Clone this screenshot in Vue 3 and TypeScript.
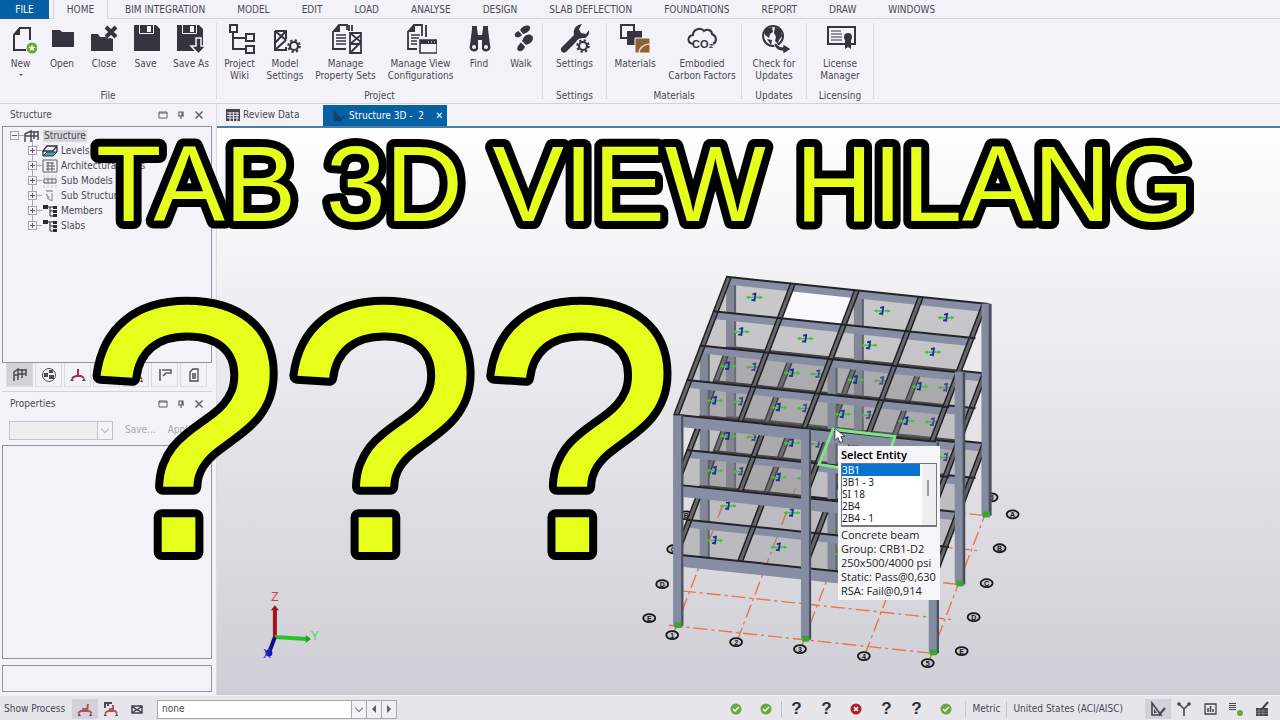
<script setup lang="ts">
import { ref } from 'vue'

interface RibbonItem { icon: string; lines: string[]; width: number; drop?: boolean }
interface RibbonGroup { title: string; items: RibbonItem[] }
interface Pt { x: number; y: number }

const tabs = ['BIM INTEGRATION', 'MODEL', 'EDIT', 'LOAD', 'ANALYSE', 'DESIGN', 'SLAB DEFLECTION', 'FOUNDATIONS', 'REPORT', 'DRAW', 'WINDOWS']

const groups: RibbonGroup[] = [
  { title: 'File', items: [
    { icon: 'new', lines: ['New'], width: 41, drop: true },
    { icon: 'open', lines: ['Open'], width: 42 },
    { icon: 'close', lines: ['Close'], width: 42 },
    { icon: 'save', lines: ['Save'], width: 41 },
    { icon: 'saveas', lines: ['Save As'], width: 50 },
  ] },
  { title: 'Project', items: [
    { icon: 'wiki', lines: ['Project', 'Wiki'], width: 45 },
    { icon: 'model', lines: ['Model', 'Settings'], width: 46 },
    { icon: 'props', lines: ['Manage', 'Property Sets'], width: 75 },
    { icon: 'views', lines: ['Manage View', 'Configurations'], width: 75 },
    { icon: 'find', lines: ['Find'], width: 42 },
    { icon: 'walk', lines: ['Walk'], width: 42 },
  ] },
  { title: 'Settings', items: [{ icon: 'wrench', lines: ['Settings'], width: 63 }] },
  { title: 'Materials', items: [
    { icon: 'materials', lines: ['Materials'], width: 56 },
    { icon: 'co2', lines: ['Embodied', 'Carbon Factors'], width: 78 },
  ] },
  { title: 'Updates', items: [{ icon: 'globe', lines: ['Check for', 'Updates'], width: 64 }] },
  { title: 'Licensing', items: [{ icon: 'license', lines: ['License', 'Manager'], width: 66 }] },
]

const tree = [
  { icon: 't-levels', label: 'Levels' },
  { icon: 't-grid', label: 'Architectural Grids' },
  { icon: 't-sub', label: 'Sub Models' },
  { icon: 't-str', label: 'Sub Structures' },
  { icon: 't-mem', label: 'Members' },
  { icon: 't-mem', label: 'Slabs' },
]
const paneTabs = ['s-frame', 's-globe', 's-support', 's-flag', 's-flag', 's-beam', 's-doc']
const checks = ['ok', 'ok', '|', 'q', 'q', 'err', 'q', 'q', 'ok']
const entities = ['3B1', '3B1 - 3', 'SI 18', '2B4', '2B4 - 1']
const selected = ref('3B1')

const STOREY = 70
const node = (i: number, j: number, level: number): Pt => ({
  x: 730 + 64 * i - 13.2 * j,
  y: 277 + 6.8 * i + 34.5 * j + STOREY * level,
})
const poly = (pts: Pt[]) => pts.map(p => `${p.x.toFixed(1)},${p.y.toFixed(1)}`).join(' ')
const idx = [0, 1, 2, 3, 4]
const opening = poly([node(1, 0, 0), node(2, 0, 0), node(2, 1, 0), node(1, 1, 0)])

const storeys = [2, 1, 0].map(level => {
  const columns = [0, 2, 4].flatMap(j => [0, 2, 4].map(i => {
    const p = node(i, j, level)
    return { x: p.x, y: p.y, h: level === 2 ? 72 : STOREY }
  }))
  const slabs: { pts: string; c: Pt }[] = []
  for (let j = 0; j < 4; j++) {
    for (let i = 0; i < 4; i++) {
      if (level === 0 && i === 1 && j === 0) continue
      if (level === 1 && i === 2 && j === 3) continue
      const q = [node(i, j, level), node(i + 1, j, level), node(i + 1, j + 1, level), node(i, j + 1, level)]
      slabs.push({ pts: poly(q), c: { x: (q[0].x + q[2].x) / 2, y: (q[0].y + q[2].y) / 2 } })
    }
  }
  const cross = idx.map(j => {
    const a = node(0, j, level), b = node(4, j, level)
    const d = j === 4 ? 12 : 8
    return { a, b, face: poly([a, b, { x: b.x, y: b.y + d }, { x: a.x, y: a.y + d }]) }
  })
  const along = idx.map(i => ({ a: node(i, 0, level), b: node(i, 4, level) }))
  return { level, columns, slabs, cross, along }
})

const ground = (i: number, j: number): Pt => {
  const p = node(i, j, 3)
  return { x: p.x, y: p.y + 2 }
}
const gridLines = [
  ...idx.map(i => [ground(i, -0.2), ground(i, 4.2)]),
  ...idx.map(j => [ground(-0.12, j), ground(4.12, j)]),
]
const bases = [0, 2, 4].flatMap(j => [0, 2, 4].map(i => ground(i, j)))
const marks = [
  { t: 'E', x: 650, y: 619 }, { t: 'D', x: 663, y: 585 }, { t: 'C', x: 674, y: 550 }, { t: 'B', x: 687, y: 516 },
  { t: '1', x: 673, y: 636 }, { t: '2', x: 737, y: 643 }, { t: '3', x: 801, y: 650 }, { t: '4', x: 865, y: 657 }, { t: '5', x: 929, y: 664 },
  { t: 'E', x: 963, y: 652 }, { t: 'D', x: 975, y: 618 }, { t: 'C', x: 988, y: 584 }, { t: 'B', x: 1001, y: 549 }, { t: 'A', x: 1014, y: 515 },
  { t: '5', x: 993, y: 498 },
]
</script>

<template>
  <div class="app">
    <svg class="defs" aria-hidden="true">
      <symbol id="new" viewBox="0 0 32 32">
        <path d="M14 5h11v12M9 12v15h12M9 12l6-7" fill="none" stroke="#36343f" stroke-width="2" />
        <path d="M8 12h7V4z" fill="#36343f" />
        <circle cx="27" cy="25" r="5.500" fill="#6aa43c" /><path d="M27 21.500l1 2.300 2.500.2-2 1.700.7 2.400-2.200-1.300-2.200 1.300.7-2.400-2-1.700 2.500-.2z" fill="#fff" />
      </symbol>
      <symbol id="open" viewBox="0 0 32 32"><path d="M6 7h8l2 2h12v15H6z" fill="#36343f" /></symbol>
      <symbol id="close" viewBox="0 0 32 32">
        <path d="M3 11h7l2 3h7l6 2v12H3z" fill="#36343f" /><path d="M18 4l10 10M28 4L18 14" stroke="#f3f2f8" stroke-width="6" /><path d="M18 4l10 10M28 4L18 14" stroke="#36343f" stroke-width="4" />
      </symbol>
      <symbol id="save" viewBox="0 0 32 32"><path d="M4 2h22l4 4v22H4z" fill="#36343f" /><path d="M17 3h4v6h-4z" fill="#f3f2f8" /><path d="M9.500 2v8.500h14V2" fill="none" stroke="#f3f2f8" /></symbol>
      <symbol id="saveas" viewBox="0 0 32 32"><path d="M2 2h22l4 4v22H2z" fill="#36343f" /><path d="M15 3h4v6h-4z" fill="#f3f2f8" /><path d="M7.500 2v8.500h14V2" fill="none" stroke="#f3f2f8" /><path d="M21 15h5v8h5l-7.500 8L16 23h5z" fill="#36343f" stroke="#f3f2f8" stroke-width="1.500" /></symbol>
      <symbol id="wiki" viewBox="0 0 32 32"><path d="M6 2h7v7H6zM22 11h8v7h-8zM22 23h8v7h-8zM9 9v17h13M9 15h13" fill="none" stroke="#36343f" stroke-width="2" /></symbol>
      <symbol id="gear" viewBox="0 0 14 14"><circle cx="7" cy="7" r="4" fill="none" stroke="#36343f" stroke-width="2.200" /><circle cx="7" cy="7" r="5.800" fill="none" stroke="#36343f" stroke-width="2" stroke-dasharray="2.300 2.250" /></symbol>
      <symbol id="model" viewBox="0 0 32 32"><path d="M6 8h11v8M6 8v19h11v-3M6 8l11 9M6 27l11-10M6 20l11-12" fill="none" stroke="#36343f" stroke-width="2" /><use href="#gear" x="18" y="16" width="14" height="14" /></symbol>
      <symbol id="props" viewBox="0 0 32 32"><path d="M16 26H3V9l6-7h8v5M22 2v6M19 2v6" fill="none" stroke="#36343f" stroke-width="1.800" /><path d="M2 9h8V1z" fill="#36343f" /><path d="M6 12h10M6 15h10M6 18h10M6 21h10" stroke="#36343f" stroke-width="1.500" /><path d="M20 10h11v20H20zM20 10l11 9M20 21l11-9M20 30l11-11M20 21h11" fill="none" stroke="#36343f" stroke-width="1.800" /></symbol>
      <symbol id="views" viewBox="0 0 32 32"><path d="M12 26H3V9l6-7h8v11M21 2v12" fill="none" stroke="#36343f" stroke-width="1.800" /><path d="M2 9h8V1z" fill="#36343f" /><path d="M6 12h9M6 15h8M6 18h6M6 21h6" stroke="#36343f" stroke-width="1.500" /><path d="M15 17h17v13H15z" fill="#f3f2f8" stroke="#36343f" stroke-width="1.600" /><path d="M15 17h17v4H15z" fill="#36343f" /><path d="M23 19h1M26 19h1M29 19h1" stroke="#fff" /></symbol>
      <symbol id="find" viewBox="0 0 32 32"><path d="M9 3h5v3l1 6h4l1-6V3h5v3l2 16a4 4 0 0 1-8 4v-9h-4v9a4 4 0 0 1-8-4L9 6z" fill="#36343f" /><circle cx="11" cy="24" r="2" fill="#f3f2f8" /><circle cx="23" cy="24" r="2" fill="#f3f2f8" /></symbol>
      <symbol id="walk" viewBox="0 0 32 32"><g fill="#36343f"><path d="M15 7c2-4 8-6 10-3 1 3-3 6-7 7z" /><path d="M13.500 8l3.500 4c-2 3-6 3-7 1s1-4 3.500-5z" /><path d="M19 14c3-4 9-3 9 1s-4 6-7 7l-4-4z" /><path d="M16 19.500l4 4c-1 4-5 6-7 4s0-5 3-8z" /></g></symbol>
      <symbol id="wrench" viewBox="0 0 32 32"><path d="M3 29c-2-2-1-4 0-5L15 12c-1-5 1-10 8-11l-3 5 2 4 5 1 3-4c1 6-4 10-10 9L7 29c-1 1-3 1-4 0z" fill="#36343f" /><circle cx="24" cy="23" r="8" fill="#f3f2f8" /><use href="#gear" x="17" y="16" width="14" height="14" /></symbol>
      <symbol id="materials" viewBox="0 0 32 32"><path d="M2 2h13v13H2z" fill="#f3f2f8" stroke="#36343f" stroke-width="2" /><path d="M8 8h15v14H8z" fill="#36343f" /><path d="M16 15h15v15H16z" fill="#8d6230" stroke="#f3f2f8" /><path d="M20 30c0-5 5-9 11-9" fill="none" stroke="#e6d9c8" stroke-width="1.500" /></symbol>
      <symbol id="co2" viewBox="0 0 32 32"><path d="M7 21c-6-1-6-8 0-9 0-6 8-8 11-4 4-3 8 0 8 3 5 2 5 8 1 10" fill="none" stroke="#36343f" stroke-width="2" /></symbol>
      <symbol id="globe" viewBox="0 0 32 32"><circle cx="15" cy="13" r="10" fill="none" stroke="#36343f" stroke-width="2" /><path d="M8 6l6-2 1 5-3 2-1 4-4-3-1-3zM17 4l6 3 1 6-3 4-1 4-3-3 1-4-2-4zM9 16l5 1-1 5z" fill="#36343f" /><path d="M18 20c2 3 4 4 7 4v-3l8 5-8 5v-3c-5 0-8-3-9-7z" fill="#36343f" stroke="#f3f2f8" stroke-width=".8" /></symbol>
      <symbol id="license" viewBox="0 0 32 32"><path d="M4 4h27v17H4z" fill="none" stroke="#36343f" stroke-width="2" /><path d="M7 8h10M7 11h11M7 14h11M7 17h11" stroke="#77757f" stroke-width="1.500" /><circle cx="24" cy="14" r="4" fill="#36343f" /><path d="M21 15h6v11l-3-2-3 2z" fill="#36343f" /></symbol>

      <symbol id="t-root" viewBox="0 0 16 14"><path d="M1 13V5l6-3v11M7 7H1M7 3h7v4H7M14 2v9M10 2v8" fill="none" stroke="#4b4955" stroke-width="1.500" /></symbol>
      <symbol id="t-levels" viewBox="0 0 16 14"><path d="M1 12h10l4-4H5z" fill="#3aa5b5" stroke="#34323d" /><path d="M1 7h10l4-5H5zM1 7v5M15 3v5" fill="#e8f1f4" stroke="#34323d" stroke-width="1.300" /></symbol>
      <symbol id="t-grid" viewBox="0 0 16 14"><path d="M1 1h14v12H1zM4 4h8M4 7h9M4 10h9M6 3v9M10 3v9" fill="none" stroke="#5d5b66" /></symbol>
      <symbol id="t-sub" viewBox="0 0 16 14"><path d="M2 5h12v4H2zM6 5v4M10 5v4" fill="none" stroke="#5d5b66" /><path d="M2 1v3M6 1v3M10 1v3M14 1v3M2 11v3M6 11v3M10 11v3M14 11v3" stroke="#c4c2cb" /></symbol>
      <symbol id="t-str" viewBox="0 0 16 14"><path d="M4 2h7M4 5l3 4M5 9l5 3M10 4v8" fill="none" stroke="#9a98a3" stroke-width="1.300" /></symbol>
      <symbol id="t-mem" viewBox="0 0 16 14"><path d="M1 1h5v4H1zM11 2h4v3h-4zM11 6h4v3h-4zM11 10h4v3h-4z" fill="#2c2a34" /><path d="M6 3h5M8 3v9h3M8 7h3" fill="none" stroke="#2c2a34" /></symbol>

      <symbol id="s-frame" viewBox="0 0 16 16"><path d="M2 14V5l4-3v11M2 8h5M6 3h8v4H6M10 2v9M14 2v7" fill="none" stroke="#4b4955" stroke-width="1.500" /></symbol>
      <symbol id="s-globe" viewBox="0 0 16 16"><circle cx="8" cy="8" r="6.500" fill="none" stroke="#4b4955" /><path d="M3 6h4v4H3zM8 3h4v3H8zM8 8h5v4H8z" fill="#4b4955" /></symbol>
      <symbol id="s-support" viewBox="0 0 16 16"><path d="M2 11l4-2h5l3 2M8 2v7" fill="none" stroke="#b9283a" stroke-width="2" /><path d="M0 14l2-3 2 3zM12 14l2-3 2 3z" fill="#4b4955" /></symbol>
      <symbol id="s-flag" viewBox="0 0 16 16"><path d="M1 2h8M2 2v5M5 2v3" stroke="#4b4955" stroke-width="2" /><path d="M2 12l3-2h7l2 2M10 4v6M6 8h3" fill="none" stroke="#b3515c" stroke-width="2" /><path d="M1 15l1-3 2 3zM12 15l2-3 1 3z" fill="#4b4955" /></symbol>
      <symbol id="s-beam" viewBox="0 0 16 16"><path d="M3 2v12M5 3h9v3H9L6 9" fill="none" stroke="#5d5b66" stroke-width="1.600" /></symbol>
      <symbol id="s-doc" viewBox="0 0 16 16"><path d="M4 5l3-3h5v12H4zM6 7h4M6 9h4M6 11h4" fill="none" stroke="#4b4955" stroke-width="1.300" /></symbol>
      <symbol id="s-run" viewBox="0 0 16 16"><path d="M1 12l3-2h8l3 2M11 3l-1 7M5 8h5" fill="none" stroke="#b3515c" stroke-width="2" /><path d="M1 15l1-3 2 3zM12 15l2-3 1 3z" fill="#4b4955" /></symbol>
      <symbol id="s-mail" viewBox="0 0 16 16"><path d="M3 5h10v7H3zM3 5l5 4 5-4M3 12l4-3M13 12L9 9" fill="none" stroke="#45434e" stroke-width="1.500" /></symbol>
      <symbol id="s-draw" viewBox="0 0 16 16"><path d="M2 2l9 12H2z" fill="none" stroke="#45434e" stroke-width="1.600" /><path d="M4 8v4h3z" fill="#45434e" /><path d="M9 14l6-7" stroke="#45434e" stroke-width="2" /></symbol>
      <symbol id="s-fork" viewBox="0 0 16 16"><path d="M8 15V8L3 3M8 8l5-5" fill="none" stroke="#45434e" stroke-width="1.600" /><circle cx="3" cy="3" r="1.800" fill="#45434e" /><circle cx="13" cy="3" r="1.800" fill="#45434e" /></symbol>
      <symbol id="s-chart" viewBox="0 0 16 16"><path d="M3 3h11v10H3z" fill="none" stroke="#45434e" stroke-width="1.300" /><path d="M6 7v4M8.500 5v6M11 8v3" stroke="#45434e" stroke-width="1.500" /></symbol>
      <symbol id="s-list" viewBox="0 0 16 16"><path d="M1 2.500h7M1 4.500h7M1 6.500h7M1 8.500h7" stroke="#45434e" /><circle cx="12" cy="12" r="3" fill="#6aa43c" /></symbol>
      <symbol id="s-pen" viewBox="0 0 16 16"><path d="M2 7h12v8H2z" fill="#45434e" /><path d="M2 10h12M2 12.500h12M5 7v8M9 7v8" stroke="#a3a1ab" stroke-width=".6" /><path d="M8 8l6-7" stroke="#45434e" stroke-width="2" /></symbol>
      <symbol id="ok" viewBox="0 0 12 12"><circle cx="6" cy="6" r="5.500" fill="#69a83e" /><path d="M3 6l2 2 4-4" fill="none" stroke="#fff" stroke-width="1.500" /></symbol>
      <symbol id="err" viewBox="0 0 12 12"><circle cx="6" cy="6" r="5.500" fill="#ad1f27" /><path d="M4 4l4 4M8 4L4 8" stroke="#fff" stroke-width="1.500" /></symbol>
      <symbol id="w-max" viewBox="0 0 10 10"><path d="M1 2h8v6H1zM1 3h8" fill="none" stroke="#62606c" /></symbol>
      <symbol id="w-pin" viewBox="0 0 10 10"><path d="M3 2h4v4H3zM2 6h6M5 6v3M6 2v4" fill="none" stroke="#62606c" stroke-width="1.200" /></symbol>
      <symbol id="w-x" viewBox="0 0 10 10"><path d="M1.500 1.500l7 7M8.500 1.500l-7 7" stroke="#62606c" stroke-width="1.500" /></symbol>
    </svg>

    <nav class="menu">
      <button class="file">FILE</button>
      <button class="home">HOME</button>
      <button v-for="t in tabs" :key="t" class="tab">{{ t }}</button>
    </nav>

    <header class="ribbon">
      <section v-for="g in groups" :key="g.title" class="group">
        <div class="items">
          <button v-for="it in g.items" :key="it.icon" class="item" :style="{ width: it.width + 'px' }">
            <svg class="big" viewBox="0 0 32 32">
              <use :href="'#' + it.icon" />
              <text v-if="it.icon === 'co2'" x="6" y="25" class="co">CO₂</text>
            </svg>
            <span v-for="l in it.lines" :key="l">{{ l }}</span>
            <i v-if="it.drop" class="drop"></i>
          </button>
        </div>
        <h2>{{ g.title }}</h2>
      </section>
    </header>

    <main class="work">
      <aside class="side">
        <div class="pane-head">
          <h3>Structure</h3>
          <button aria-label="Maximise"><svg><use href="#w-max" /></svg></button>
          <button aria-label="Pin"><svg><use href="#w-pin" /></svg></button>
          <button aria-label="Close pane"><svg><use href="#w-x" /></svg></button>
        </div>
        <div class="box tree">
          <div class="row root"><i class="tog minus"></i><svg><use href="#t-root" /></svg><b>Structure</b></div>
          <div class="kids">
            <div v-for="n in tree" :key="n.label" class="row"><i class="tog"></i><svg><use :href="'#' + n.icon" /></svg><span>{{ n.label }}</span></div>
          </div>
        </div>
        <div class="pane-tabs">
          <button v-for="(p, i) in paneTabs" :key="i" :class="{ on: i === 0 }" :aria-label="'Pane ' + (i + 1)"><svg><use :href="'#' + p" /></svg></button>
        </div>
        <div class="pane-head second">
          <h3>Properties</h3>
          <button aria-label="Maximise"><svg><use href="#w-max" /></svg></button>
          <button aria-label="Pin"><svg><use href="#w-pin" /></svg></button>
          <button aria-label="Close pane"><svg><use href="#w-x" /></svg></button>
        </div>
        <div class="prop-bar">
          <div class="combo disabled"><select disabled aria-label="Property set"></select><i class="chev"></i></div>
          <button disabled>Save...</button>
          <button disabled>Apply...</button>
        </div>
        <div class="box props"></div>
        <div class="box note"></div>
      </aside>

      <section class="stage">
        <div class="docs">
          <button class="doc">
            <svg viewBox="0 0 14 12"><path d="M0 0h14v12H0z" fill="#45434e" /><path d="M1 4h12M1 6.500h12M1 9h12M4 3v9M7.500 3v9M11 3v9" stroke="#f3f2f8" stroke-width=".9" /></svg>Review Data
          </button>
          <button class="doc active"><svg viewBox="0 0 16 16"><path d="M2 2l9 12H2zM9 14l7-7" fill="#1d3f66" stroke="#1d3f66" stroke-width="2" /></svg>Structure 3D -&nbsp; 2<b>✕</b></button>
        </div>
        <div class="view">
          <svg class="scene" viewBox="217 128 1063 568" preserveAspectRatio="xMinYMin meet">
            <g stroke="#e8764a" stroke-width="1.400" stroke-dasharray="14 4 3 4">
              <line v-for="(l, k) in gridLines" :key="k" :x1="l[0].x" :y1="l[0].y" :x2="l[1].x" :y2="l[1].y" />
            </g>
            <g v-for="(m, k) in marks" :key="'m' + k">
              <ellipse :cx="m.x" :cy="m.y" rx="6" ry="4" fill="#c9c8d0" stroke="#17171b" stroke-width="1.800" />
              <text :x="m.x" :y="m.y + 3" class="mark">{{ m.t }}</text>
            </g>
            <g v-for="s in storeys" :key="s.level">
              <g v-for="(c, k) in s.columns" :key="k">
                <rect :x="c.x - 3" :y="c.y" width="9" :height="c.h" fill="#858ca2" />
                <rect :x="c.x + 5" :y="c.y" width="2" :height="c.h" fill="#4c4f5c" />
              </g>
              <polygon v-if="s.level === 0" :points="opening" fill="#fafafc" />
              <polygon v-for="(p, k) in s.slabs" :key="'s' + k" :points="p.pts" fill="#828282" fill-opacity=".36" />
              <polygon v-for="(b, k) in s.cross" :key="'f' + k" :points="b.face" fill="#878da3" />
              <line v-for="(b, k) in s.along" :key="'a' + k" :x1="b.a.x" :y1="b.a.y" :x2="b.b.x" :y2="b.b.y" stroke="#202024" stroke-width="6" />
              <line v-for="(b, k) in s.along" :key="'c' + k" :x1="b.a.x" :y1="b.a.y" :x2="b.b.x" :y2="b.b.y" stroke="#66666c" stroke-width="3" />
              <line v-for="(b, k) in s.cross" :key="'t' + k" :x1="b.a.x - 3" :y1="b.a.y" :x2="b.b.x + 4" :y2="b.b.y" stroke="#232328" stroke-width="2" />
              <g v-for="(p, k) in s.slabs" :key="'r' + k">
                <path :d="`M${p.c.x - 8} ${p.c.y}h16`" stroke="#3fc43c" stroke-width="1.500" />
                <path :d="`M${p.c.x - 5} ${p.c.y - 2}v4l-3 -2zm10 0v4l3 -2z`" fill="#3fc43c" />
                <path :d="`M${p.c.x + 1} ${p.c.y - 4}l-1 8m-2 -7l4 -1m-5 7l4 -1`" fill="none" stroke="#1c2f9c" stroke-width="1.800" />
              </g>
            </g>
            <g fill="#858ca2">
              <rect x="674" y="416" width="9" height="209" /><rect x="802" y="430" width="9" height="209" /><rect x="930" y="443" width="9" height="209" />
              <rect x="956" y="372" width="9" height="210" /><rect x="983" y="304" width="8" height="210" />
            </g>
            <path d="M683 416v209M811 430v209M939 443v209M965 372v210M991 304v210" stroke="#4c4f5c" stroke-width="2" />
            <rect v-for="(b, k) in bases" :key="'b' + k" :x="b.x - 2" :y="b.y - 4" width="7" height="6" :fill="k < 2 || k === 3 || k === 4 ? 'none' : '#35a832'" />
            <path d="M840 468l-20-3 14-35 62 7-4 12" fill="none" stroke="#7fe58a" stroke-width="3" />
            <path d="M836 429v12l3-3 2 5 3-1-2-5h4z" fill="#fff" stroke="#333" stroke-width=".8" />
            <g fill="none" stroke-width="4">
              <path d="M275 638v-28" stroke="#a01418" /><path d="M275 638l32 2" stroke="#24c428" /><path d="M275 638l-6 16" stroke="#101080" />
            </g>
            <path d="M271 611l4-5 4 5z" fill="#a01418" /><path d="M306 636l5 4-5 4z" fill="#1d9e22" /><circle cx="269" cy="654" r="3.500" fill="#1616a0" />
            <text x="275" y="602" class="axis z">Z</text><text x="315" y="641" class="axis y">Y</text><text x="267" y="659" class="axis x">X</text>
          </svg>

          <div class="tip">
            <h4>Select Entity</h4>
            <div class="list" role="listbox" aria-label="Select Entity">
              <button v-for="e in entities" :key="e" role="option" :aria-selected="e === selected" :class="{ on: e === selected }" @click="selected = e">{{ e }}</button>
              <i class="thumb"></i>
            </div>
            <p>Concrete beam</p><p>Group: CRB1-D2</p><p>250x500/4000 psi</p><p>Static: Pass@0,630</p><p>RSA: Fail@0,914</p>
          </div>
        </div>
      </section>
    </main>

    <footer class="status">
      <label for="proc">Show Process</label>
      <button class="ic on" aria-label="Run"><svg><use href="#s-run" /></svg></button>
      <button class="ic" aria-label="Flag"><svg><use href="#s-flag" /></svg></button>
      <button class="ic" aria-label="Messages"><svg><use href="#s-mail" /></svg></button>
      <div class="combo main-combo"><select id="proc"><option>none</option></select><i class="chev"></i></div>
      <button class="step" aria-label="Previous"><i class="prev"></i></button>
      <button class="step" aria-label="Next"><i class="next"></i></button>
      <div class="right">
        <div class="checks">
          <template v-for="(c, i) in checks" :key="i">
            <i v-if="c === '|'" class="bar"></i>
            <b v-else-if="c === 'q'">?</b>
            <svg v-else><use :href="'#' + c" /></svg>
          </template>
        </div>
        <span class="unit">Metric</span>
        <span class="unit code">United States (ACI/AISC)</span>
        <button class="ic on" aria-label="Draw mode"><svg><use href="#s-draw" /></svg></button>
        <button class="ic" aria-label="Nodes"><svg><use href="#s-fork" /></svg></button>
        <button class="ic" aria-label="Chart"><svg><use href="#s-chart" /></svg></button>
        <button class="ic" aria-label="List"><svg><use href="#s-list" /></svg></button>
        <button class="ic" aria-label="Edit"><svg><use href="#s-pen" /></svg></button>
      </div>
    </footer>

    <svg class="caption" viewBox="0 0 1280 720" preserveAspectRatio="xMinYMin meet">
      <text x="96" y="221" class="t1">TAB 3D VIEW HILANG</text>
      <text x="86" y="552" class="t2">???</text>
    </svg>
  </div>
</template>

<style>
html, body { margin: 0; background: #f3f2f8; }
</style>

<style scoped>
* { box-sizing: border-box; }
.app { position: relative; display: flex; flex-direction: column; min-height: 100vh; overflow: hidden; background: #f3f2f8; color: #4a4856; font: 10px/12px "DejaVu Sans Condensed", "DejaVu Sans", sans-serif; }
button { border: 0; padding: 0; margin: 0; background: none; color: inherit; font: inherit; white-space: nowrap; }
h2, h3, h4, p { margin: 0; font: inherit; }
i { font-style: normal; }
.defs { position: absolute; width: 0; height: 0; }
.menu { display: flex; height: 19px; border-bottom: 1px solid #d3d2d9; }
.menu button { flex: none; height: 19px; }
.file { width: 49px; background: #0560a4; color: #fff; }
.menu .home { width: 55px; margin: 0 1px 0 4px; border: 1px solid #d3d2d9; border-width: 0 1px; background: #f3f2f8; }
.tab { padding: 0 16px; }
.ribbon { display: flex; height: 85px; padding-top: 4px; border-bottom: 1px solid #d3d2d9; }
.group { display: flex; flex-direction: column; height: 76px; border-right: 1px solid #dddce3; }
.items { display: flex; flex: 1; }
.item { display: flex; flex-direction: column; align-items: center; flex: none; }
.item span { line-height: 12px; }
.big { width: 32px; height: 32px; margin-bottom: 3px; flex: none; overflow: visible; }
.drop { border: 2px solid transparent; border-top-color: #5a5866; margin-top: 4px; }
.group h2 { text-align: center; line-height: 12px; margin-bottom: -3px; }
.co { font: bold 11px "Liberation Sans", "DejaVu Sans", sans-serif; fill: #36343f; }

.work { display: flex; flex: 1; }
.side { display: flex; flex-direction: column; width: 217px; flex: none; padding: 0 4px 3px 2px; border-right: 1px solid #dcdbe2; }
.pane-head { display: flex; align-items: center; height: 22px; padding: 0 8px; gap: 8px; }
.pane-head h3 { flex: 1; }
.pane-head button, .pane-head svg { display: block; width: 10px; height: 10px; }
.box { border: 1px solid #94929c; background: #f3f2f8; }
.side .box { margin-right: -1px; width: 210px; }
.tree { height: 237px; padding: 1px 0 0 7px; overflow: hidden; }
.row { display: flex; align-items: center; height: 15px; white-space: nowrap; }
.row svg { width: 16px; height: 14px; margin: 0 3px 0 5px; flex: none; }
.tog { position: relative; z-index: 1; width: 9px; height: 9px; flex: none; border: 1px solid #a5a3ae; background: linear-gradient(#5f5d69, #5f5d69) center / 5px 1px no-repeat, linear-gradient(#5f5d69, #5f5d69) center / 1px 5px no-repeat, #f3f2f8; }
.minus { background: linear-gradient(#5f5d69, #5f5d69) center / 5px 1px no-repeat, #f3f2f8; }
.tog::after { content: ""; position: absolute; left: 8px; top: 3px; width: 5px; border-top: 1px solid #aaa8b3; }
.row b { font-weight: 400; background: #d6d5dc; padding: 0 1px; }
.kids { position: relative; padding-left: 18px; }
.kids::before { content: ""; position: absolute; left: 22px; top: -3px; bottom: 8px; border-left: 1px solid #aaa8b3; }
.pane-tabs { display: flex; gap: 2px; padding: 0 4px; height: 29px; border-bottom: 1px solid #d3d2d9; }
.pane-tabs button { display: grid; place-items: center; width: 27px; height: 24px; border: 1px solid #dcdbe2; border-top: 0; }
.pane-tabs .on { background: #d3d2d9; }
.pane-tabs svg { width: 16px; height: 16px; }
.second { height: 24px; }
.prop-bar { display: flex; align-items: center; gap: 12px; height: 28px; padding: 0 7px; color: #a9a8b0; overflow: hidden; }
.combo { position: relative; display: flex; height: 19px; border: 1px solid #aaa9b2; background: #fff; }
.combo select { appearance: none; flex: 1; border: 0; padding: 0 4px; margin: 0; background: none; color: #4a4856; font: inherit; outline: 0; }
.chev { display: grid; place-items: center; width: 15px; border-left: 1px solid #aaa9b2; background: #f3f2f8; pointer-events: none; }
.chev::after { content: ""; width: 5px; height: 5px; margin-top: -3px; border: solid #77757f; border-width: 0 1px 1px 0; transform: rotate(45deg); }
.disabled { width: 104px; background: #eeedf0; border-color: #c3c2c9; }
.disabled .chev { border-color: #c3c2c9; }
.disabled .chev::after { border-color: #b5b4bc; }
.props { flex: 1; margin-top: 1px; margin-bottom: 6px; }
.note { height: 27px; }

.stage { display: flex; flex-direction: column; flex: 1; min-width: 0; }
.docs { display: flex; height: 24px; border-bottom: 2px solid #457fa9; }
.doc { display: flex; align-items: center; gap: 3px; width: 98px; margin-right: 8px; padding-left: 9px; }
.doc svg { width: 14px; height: 12px; }
.doc.active { width: 124px; margin-top: 1px; background: #0560a4; color: #fff; }
.doc b { margin-left: auto; margin-right: 4px; }
.view { position: relative; flex: 1; background: linear-gradient(#fefefe, #e6e5ea 50%, #cfced6); }
.scene { position: absolute; inset: 0; width: 100%; height: 100%; }
.mark { font: bold 7px "Liberation Sans", sans-serif; text-anchor: middle; fill: #111; }
.axis { font: 12px "Liberation Sans", sans-serif; text-anchor: middle; }
.z { fill: #d8404a; } .y { fill: #3ddc48; } .x { fill: #2a2ae0; }
.tip { position: absolute; left: 621px; top: 318px; width: 102px; padding: 1px 3px 2px; background: #f6f6f8; color: #222; font: 11px/14px "Noto Sans", "Open Sans", sans-serif; white-space: nowrap; }
.tip h4 { font-weight: 600; line-height: 16px; color: #000; }
.tip p { font-size: 11px; font-family: "Open Sans", "Noto Sans", sans-serif; }
.list { position: relative; display: flex; flex-direction: column; height: 64px; margin-bottom: 1px; padding-right: 16px; border: 1px solid #77767d; border-bottom-width: 2px; background: linear-gradient(90deg, #fff 80px, #efeff2 80px); font-size: 10px; }
.list button { text-align: left; height: 12px; line-height: 12px; }
.list .on { background: #0573cf; color: #fff; }
.thumb { position: absolute; right: 7px; top: 16px; width: 2px; height: 16px; background: #9a9a9f; }

.status { display: flex; align-items: center; height: 25px; padding: 2px 0 0 4px; background: #e6e5ec; border-top: 1px solid #efeef4; }
.status label { width: 68px; }
.ic { display: grid; place-items: center; width: 26px; height: 20px; flex: none; }
.ic.on { background: #d2d1d9; }
.ic svg { width: 16px; height: 16px; }
.main-combo { width: 210px; margin-left: 7px; }
.step { display: grid; place-items: center; width: 15px; height: 19px; border: 1px solid #aaa9b2; border-left: 0; background: #f0eff5; }
.prev, .next { border: 4px solid transparent; }
.prev { border-right-color: #5d5b66; margin-left: -4px; }
.next { border-left-color: #5d5b66; margin-right: -4px; }
.right { display: flex; align-items: center; margin-left: auto; padding-right: 5px; }
.checks { display: flex; align-items: center; gap: 18px; padding-right: 13px; }
.checks svg { width: 12px; height: 12px; }
.checks b { width: 12px; text-align: center; font: bold 17px/18px "Liberation Sans", sans-serif; color: #302e3a; }
.bar { width: 1px; height: 16px; margin: 0 -10px 0 -9px; background: #bfbec6; }
.unit { padding: 2px 6px; border-left: 1px solid #c6c5cd; }
.code { padding-right: 22px; }

.caption { position: absolute; inset: 0; width: 100%; height: 100%; pointer-events: none; }
.caption text { font-family: "Liberation Sans", Arial, sans-serif; fill: #e6ff1a; stroke: #000; stroke-width: 16px; stroke-linejoin: round; paint-order: stroke fill; }
.caption .t1 { font-size: 107px; }
.caption .t2 { font-size: 354px; }
</style>
